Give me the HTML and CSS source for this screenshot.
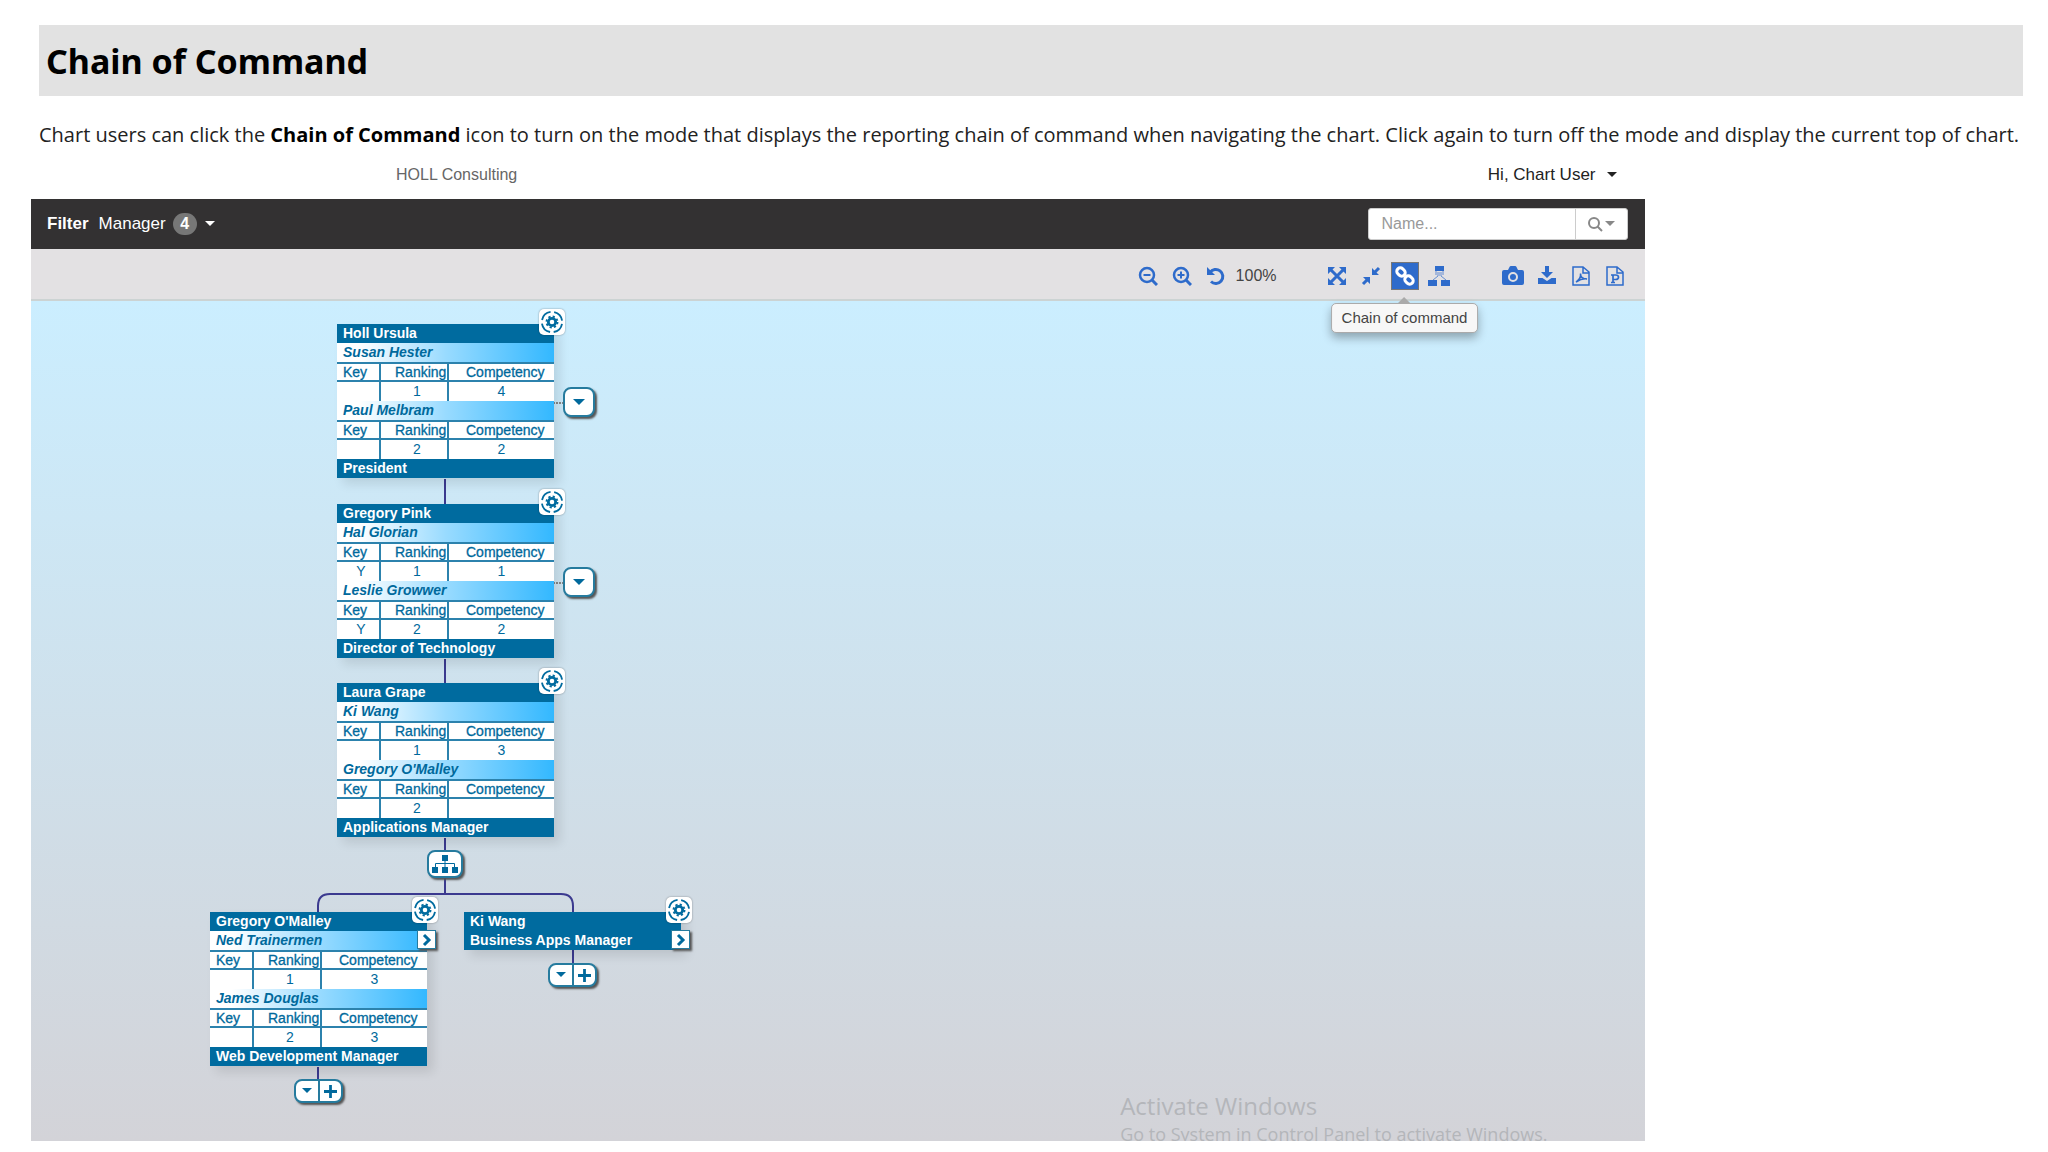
FILE: index.html
```
<!DOCTYPE html>
<html lang="en">
<head>
  <meta charset="UTF-8">
  <meta name="viewport" content="width=device-width, initial-scale=1.0">
  <title>Chain of Command</title>
  <link rel="stylesheet" href="styles.css">
</head>
<body>

  <!-- Shared icons -->
  <svg class="sprite" aria-hidden="true">
    <symbol id="i-gear" viewBox="0 0 26 26">
      <g fill="none" stroke="#006b9f" stroke-width="2">
        <circle cx="13" cy="13" r="11" stroke-dasharray="13.3 4" stroke-dashoffset="-2"/>
        <circle cx="13" cy="13" r="4" stroke-width="3"/>
        <circle cx="13" cy="13" r="6" stroke-width="2" stroke-dasharray="2.4 2.31"/>
      </g>
    </symbol>
    <symbol id="i-down" viewBox="0 0 12 7"><path fill="currentColor" d="M0 0h12L6 6z"/></symbol>
    <symbol id="i-plus" viewBox="0 0 14 14"><path fill="none" stroke="currentColor" stroke-width="3" d="M7 0v14M0 7h14"/></symbol>
    <symbol id="i-next" viewBox="0 0 12 14"><path fill="none" stroke="currentColor" stroke-width="3" d="M3 2l5 5-5 5"/></symbol>
    <symbol id="i-tree" viewBox="0 0 26 18">
      <path fill="currentColor" d="M10 0h6v6h-6zM0 12h6v6H0zM10 12h6v6h-6zM20 12h6v6h-6z"/>
      <path fill="none" stroke="currentColor" d="M13 5v7M3.500 12V8.500h19V12"/>
    </symbol>
  </svg>

  <h1>Chain of Command</h1>
  <p class="intro">Chart users can click the <b>Chain of Command</b> icon to turn on the mode that displays the reporting chain of command when navigating the chart. Click again to turn off the mode and display the current top of chart.</p>

  <main class="app">
    <div class="account">
      <span class="company">HOLL Consulting</span>
      <button class="user">Hi, Chart User <svg class="caret"><use href="#i-down"/></svg></button>
    </div>

    <div class="navbar">
      <button class="filter"><b>Filter</b> <span>Manager</span> <span class="badge">4</span> <svg class="caret"><use href="#i-down"/></svg></button>
      <form class="search">
        <input type="text" placeholder="Name..." aria-label="Name">
        <button type="button" aria-label="Search">
          <svg width="16" height="16" viewBox="0 0 16 16"><g fill="none" stroke="currentColor" stroke-width="2"><circle cx="7" cy="7" r="5"/><path d="M10.500 10.500L15 15"/></g></svg>
          <svg class="caret"><use href="#i-down"/></svg>
        </button>
      </form>
    </div>

    <div class="toolbar">
      <div class="tools">
        <button aria-label="Zoom out"><svg viewBox="0 0 20 20"><g fill="none" stroke="currentColor" stroke-width="2.500"><circle cx="9" cy="9" r="7"/><path stroke-width="3" d="M14 14l5 5"/><path stroke-width="2" d="M5.500 9h7"/></g></svg></button>
        <button aria-label="Zoom in"><svg viewBox="0 0 20 20"><g fill="none" stroke="currentColor" stroke-width="2.500"><circle cx="9" cy="9" r="7"/><path stroke-width="3" d="M14 14l5 5"/><path stroke-width="2" d="M5.500 9h7M9 5.500v7"/></g></svg></button>
        <button aria-label="Reset zoom"><svg viewBox="0 0 20 20"><path fill="none" stroke="currentColor" stroke-width="3" d="M4 6.500A7 7 0 1 1 5 15.500"/><path fill="currentColor" d="M1 1v8h8z"/></svg></button>
        <span class="zoom">100%</span>
      </div>
      <div class="tools">
        <button aria-label="Expand"><svg viewBox="0 0 20 20"><path fill="none" stroke="currentColor" stroke-width="3" d="M4 4l12 12M16 4L4 16"/><path fill="currentColor" d="M1 1h7L1 8zM19 1v7l-7-7zM1 19v-7l7 7zM19 19h-7l7-7z"/></svg></button>
        <button aria-label="Collapse"><svg viewBox="0 0 20 20"><path fill="none" stroke="currentColor" stroke-width="3" d="M2 18l5-5M18 2l-5 5"/><path fill="currentColor" d="M9 11v7l-7-7zM11 9V2l7 7z"/></svg></button>
        <button class="active" aria-label="Chain of command"><svg viewBox="0 0 20 20"><g fill="none" stroke="currentColor" stroke-width="3"><rect x="1.500" y="2.500" width="9" height="7" rx="3.500" transform="rotate(45 6 6)"/><rect x="9.500" y="10.500" width="9" height="7" rx="3.500" transform="rotate(45 14 14)"/></g></svg><span class="tooltip">Chain of command</span></button>
        <button aria-label="Hierarchy"><svg class="wide" viewBox="0 0 22 20"><path fill="currentColor" d="M7 0h9v5H7zM0 14h9v6H0zM13 14h9v6h-9z"/><path fill="none" stroke="currentColor" opacity=".7" d="M9 7h5M9 9h5M10 10l-5 4M13 10l5 4M8 5v4M15 5v4"/></svg></button>
      </div>
      <div class="tools">
        <button aria-label="Take picture"><svg class="wide" viewBox="0 0 22 20"><path fill="currentColor" fill-rule="evenodd" d="M2 4h4l1.500-3q.3-1 1.500-1h4q1.200 0 1.500 1L16 4h4q2 0 2 2v11q0 2-2 2H2q-2 0-2-2V6q0-2 2-2zm9 2a5 5 0 1 0 0 10a5 5 0 0 0 0-10zm0 2a3 3 0 1 1 0 6a3 3 0 0 1 0-6z"/></svg></button>
        <button aria-label="Download"><svg viewBox="0 0 20 20"><path fill="currentColor" d="M8 0h4v6h4l-6 6-6-6h4zM1 12h4.500l4.500 3 4.500-3H19v6H1z"/></svg></button>
        <button aria-label="Export PDF"><svg viewBox="0 0 20 20"><g fill="none" stroke="currentColor" stroke-width="1.500"><path d="M2 1h10l6 5v13H2zM12 1v6h6"/><path d="M5 16c3-2 5-5 4.500-8.500C9.500 11 12 13 16 13c-3-.500-7 .5-11 3z"/></g></svg></button>
        <button aria-label="Export PowerPoint"><svg viewBox="0 0 20 20"><g fill="none" stroke="currentColor" stroke-width="1.500"><path d="M2 1h10l6 5v13H2zM12 1v6h6"/><path d="M6 16.500h4M6 9h4.500c4 0 4 4.500 0 4.500H8M8 9v7" stroke-width="1.700"/></g></svg></button>
      </div>
    </div>

    <div class="canvas">
      <svg class="links" aria-hidden="true">
        <path d="M414 178v25M414 358v25M414 537v56M287 611v-6q0-12 12-12h231q12 0 12 12v6M287 766v14M542 649v14"/>
        <path class="dots" d="M522 102h12M522 282h12"/>
      </svg>

      <section class="node" style="left:306px;top:23px">
        <h2>Holl Ursula</h2>
        <table>
          <caption>Susan Hester</caption>
          <tr><th>Key</th><th>Ranking</th><th>Competency</th></tr>
          <tr><td></td><td>1</td><td>4</td></tr>
        </table>
        <table>
          <caption>Paul Melbram</caption>
          <tr><th>Key</th><th>Ranking</th><th>Competency</th></tr>
          <tr><td></td><td>2</td><td>2</td></tr>
        </table>
        <h3>President</h3>
        <button class="gear" aria-label="Settings"><svg><use href="#i-gear"/></svg></button>
        <button class="side" aria-label="Show peers"><svg width="12" height="7"><use href="#i-down"/></svg></button>
      </section>

      <section class="node" style="left:306px;top:203px">
        <h2>Gregory Pink</h2>
        <table>
          <caption>Hal Glorian</caption>
          <tr><th>Key</th><th>Ranking</th><th>Competency</th></tr>
          <tr><td>Y</td><td>1</td><td>1</td></tr>
        </table>
        <table>
          <caption>Leslie Growwer</caption>
          <tr><th>Key</th><th>Ranking</th><th>Competency</th></tr>
          <tr><td>Y</td><td>2</td><td>2</td></tr>
        </table>
        <h3>Director of Technology</h3>
        <button class="gear" aria-label="Settings"><svg><use href="#i-gear"/></svg></button>
        <button class="side" aria-label="Show peers"><svg width="12" height="7"><use href="#i-down"/></svg></button>
      </section>

      <section class="node" style="left:306px;top:382px">
        <h2>Laura Grape</h2>
        <table>
          <caption>Ki Wang</caption>
          <tr><th>Key</th><th>Ranking</th><th>Competency</th></tr>
          <tr><td></td><td>1</td><td>3</td></tr>
        </table>
        <table>
          <caption>Gregory O'Malley</caption>
          <tr><th>Key</th><th>Ranking</th><th>Competency</th></tr>
          <tr><td></td><td>2</td><td></td></tr>
        </table>
        <h3>Applications Manager</h3>
        <button class="gear" aria-label="Settings"><svg><use href="#i-gear"/></svg></button>
        <button class="branch" aria-label="Show branch"><svg width="26" height="18"><use href="#i-tree"/></svg></button>
      </section>

      <section class="node" style="left:179px;top:611px">
        <h2>Gregory O'Malley</h2>
        <table>
          <caption>Ned Trainermen</caption>
          <tr><th>Key</th><th>Ranking</th><th>Competency</th></tr>
          <tr><td></td><td>1</td><td>3</td></tr>
        </table>
        <table>
          <caption>James Douglas</caption>
          <tr><th>Key</th><th>Ranking</th><th>Competency</th></tr>
          <tr><td></td><td>2</td><td>3</td></tr>
        </table>
        <h3>Web Development Manager</h3>
        <button class="gear" aria-label="Settings"><svg><use href="#i-gear"/></svg></button>
        <button class="next" aria-label="Details"><svg width="12" height="14"><use href="#i-next"/></svg></button>
        <div class="more">
          <button aria-label="Show reports"><svg width="10" height="6"><use href="#i-down"/></svg></button>
          <button aria-label="Show all"><svg width="13" height="13"><use href="#i-plus"/></svg></button>
        </div>
      </section>

      <section class="node" style="left:433px;top:611px">
        <h2>Ki Wang</h2>
        <h3>Business Apps Manager</h3>
        <button class="gear" aria-label="Settings"><svg><use href="#i-gear"/></svg></button>
        <button class="next" aria-label="Details"><svg width="12" height="14"><use href="#i-next"/></svg></button>
        <div class="more">
          <button aria-label="Show reports"><svg width="10" height="6"><use href="#i-down"/></svg></button>
          <button aria-label="Show all"><svg width="13" height="13"><use href="#i-plus"/></svg></button>
        </div>
      </section>

      <div class="watermark">
        <p class="watermark-title">Activate Windows</p>
        <p>Go to System in Control Panel to activate Windows.</p>
      </div>
    </div>
  </main>

</body>
</html>
```
FILE: styles.css
```
* {
  margin: 0;
  padding: 0;
  box-sizing: border-box;
}

body {
  display: flex;
  flex-direction: column;
  min-height: 100vh;
  padding: 25px 25px 11px 31px;
  background: #fff;
  font-family: "Liberation Sans", Arial, sans-serif;
  font-size: 17px;
  color: #222;
}

button {
  font: inherit;
  color: inherit;
  background: none;
  border: none;
  cursor: pointer;
}

svg {
  display: block;
}

.sprite {
  position: absolute;
  width: 0;
  height: 0;
}

h1 {
  margin-left: 8px;
  padding: 1px 7px 0;
  font-family: "Noto Sans", sans-serif;
  font-size: 34px;
  line-height: 70px;
  color: #000;
  background: #e2e2e2;
}

.intro {
  margin: 24px 0 0 8px;
  font-family: "Open Sans", sans-serif;
  font-size: 20px;
  line-height: 30px;
  white-space: nowrap;
}

.intro b {
  color: #000;
}

.app {
  display: flex;
  flex-direction: column;
  flex: 1;
  width: 81%;
}

.account {
  display: flex;
  justify-content: space-between;
  align-items: center;
  height: 49px;
  padding: 0 28px 0 365px;
}

.company {
  font-size: 16px;
  color: #666;
}

.user,
.filter {
  display: flex;
  align-items: center;
}

.caret {
  width: 10px;
  height: 6px;
}

.user .caret {
  margin-left: 11px;
}

.navbar {
  display: flex;
  justify-content: space-between;
  align-items: center;
  height: 50px;
  padding: 0 17px 0 16px;
  background: #333132;
  color: #fff;
}

.filter span {
  margin-left: 10px;
}

.filter .badge {
  width: 24px;
  margin-left: 7px;
  border-radius: 12px;
  background: #777;
  font-size: 16px;
  font-weight: bold;
  line-height: 22px;
}

.filter .caret {
  margin-left: 8px;
}

.search {
  display: flex;
  width: 260px;
  height: 32px;
  background: #fff;
  border: 1px solid #ccc;
  border-radius: 3px;
}

.search input {
  flex: 1;
  min-width: 0;
  padding: 0 13px;
  border: none;
  background: none;
  font: inherit;
  font-size: 16px;
}

.search input::placeholder {
  color: #999;
}

.search button {
  display: flex;
  align-items: center;
  justify-content: center;
  gap: 2px;
  width: 52px;
  border-left: 1px solid #ccc;
  color: #888;
}

.toolbar {
  display: flex;
  justify-content: flex-end;
  gap: 46px;
  height: 52px;
  padding: 13px 16px 9px;
  background: #e3e1e3;
  border-bottom: 2px solid #ccd3d3;
}

.tools {
  display: flex;
  align-items: center;
  gap: 6px;
  color: #2e6bcb;
}

.tools button {
  position: relative;
  display: flex;
  align-items: center;
  justify-content: center;
  width: 28px;
  height: 28px;
}

.tools svg {
  width: 20px;
  height: 20px;
}

.tools svg.wide {
  width: 22px;
}

.tools .active {
  background: #2e6bcb;
  color: #fff;
  border: 1px solid #777;
}

.zoom {
  font-size: 16px;
  color: #444;
}

.tooltip {
  position: absolute;
  top: 40px;
  left: 50%;
  z-index: 2;
  transform: translateX(-50%);
  padding: 0 10px;
  background: #f7f7f7;
  border: 1px solid #aaa;
  border-radius: 5px;
  box-shadow: 0 5px 10px rgba(0, 0, 0, 0.3);
  font-size: 15px;
  line-height: 28px;
  color: #444;
  white-space: nowrap;
}

.tooltip::before {
  content: "";
  position: absolute;
  top: -7px;
  left: 50%;
  margin-left: -6px;
  border: 6px solid transparent;
  border-top: none;
  border-bottom-color: #aaa;
}

/* Chart canvas */
.canvas {
  position: relative;
  flex: 1;
  min-height: 800px;
  overflow: hidden;
  background: linear-gradient(#cbeeff, #d3d3d8);
}

.links {
  position: absolute;
  width: 100%;
  height: 100%;
  fill: none;
  stroke: #3b3a8f;
  stroke-width: 2;
}

.links .dots {
  stroke: #888;
  stroke-dasharray: 2 1;
}

.node {
  position: absolute;
  width: 217px;
  color: #00699c;
  font-size: 14px;
  box-shadow: 6px 6px 10px rgba(0, 0, 0, 0.1);
}

.node h2,
.node h3 {
  padding-left: 6px;
  background: #006b9f;
  color: #fff;
  font-size: 14px;
  line-height: 19px;
}

.node table {
  width: 100%;
  table-layout: fixed;
  border-collapse: separate;
  border-spacing: 0;
  background: #fff;
}

.node caption {
  padding-left: 6px;
  background: linear-gradient(to right, #fff 10%, #99dbff 50%, #33b8ff);
  font-style: italic;
  font-weight: bold;
  line-height: 19px;
  text-align: left;
}

.node th,
.node td {
  border-right: 2px solid #2c82ad;
  font-weight: normal;
  text-align: center;
  overflow: hidden;
}

.node th {
  height: 20px;
  border-top: 2px solid #2c82ad;
  border-bottom: 2px solid #2c82ad;
  line-height: 16px;
  text-align: left;
  -webkit-text-stroke: 0.3px;
}

.node td {
  height: 19px;
  padding-left: 6px;
  line-height: 19px;
}

.node td:last-child {
  padding-left: 0;
}

.node th:nth-child(1) {
  width: 44px;
  padding-left: 6px;
}

.node th:nth-child(2) {
  width: 68px;
  padding-left: 14px;
}

.node th:nth-child(3) {
  padding-left: 17px;
}

.node th:last-child,
.node td:last-child {
  border-right: none;
}

.gear,
.side,
.next,
.branch {
  position: absolute;
  display: flex;
  align-items: center;
  justify-content: center;
  background: #fff;
}

.gear {
  top: -15px;
  right: -11px;
  width: 26px;
  height: 26px;
  border-radius: 5px;
  box-shadow: 0 0 2px rgba(0, 0, 0, 0.4);
}

.gear svg {
  width: 24px;
  height: 24px;
}

.side,
.branch,
.more {
  border: 2px solid #267b9e;
  border-radius: 8px;
  box-shadow: 2px 2px 2px #555;
}

.side {
  top: 63px;
  right: -41px;
  width: 32px;
  height: 30px;
}

.next {
  top: 18px;
  right: -9px;
  width: 19px;
  height: 19px;
  border: 1px solid #267b9e;
  box-shadow: 2px 2px 2px #555;
}

.branch {
  top: calc(100% + 13px);
  left: 90px;
  width: 36px;
  height: 28px;
}

.more {
  position: absolute;
  top: calc(100% + 13px);
  left: 84px;
  display: flex;
  width: 49px;
  height: 24px;
  background: #fff;
}

.more button {
  display: flex;
  flex: 1;
  align-items: center;
  justify-content: center;
}

.more button + button {
  border-left: 2px solid #267b9e;
}

.watermark {
  position: absolute;
  right: 97px;
  bottom: -6px;
  font-family: "Open Sans", sans-serif;
  font-size: 18px;
  line-height: 26px;
  color: #b4b6ba;
}

.watermark-title {
  font-size: 24px;
  line-height: 30px;
}
```
